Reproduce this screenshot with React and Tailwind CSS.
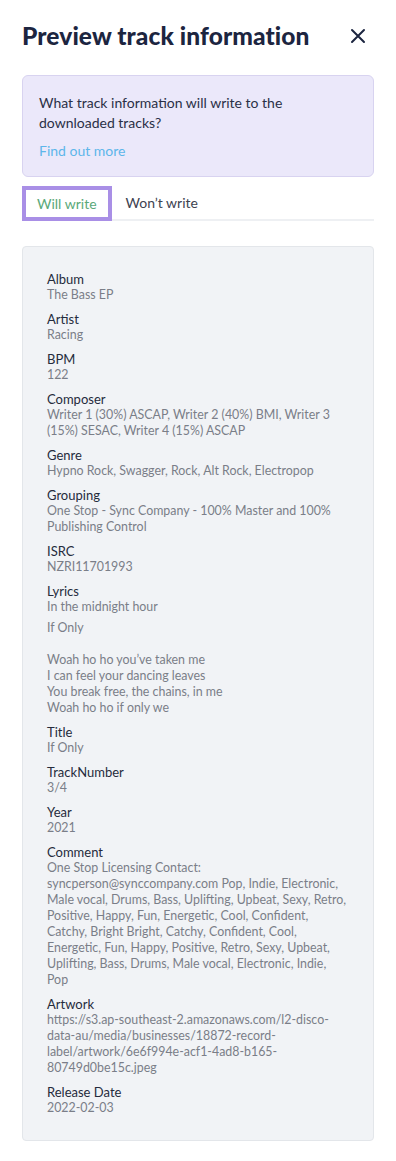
import React, { useState } from 'react';

const fields = [
  { label: 'Album', value: 'The Bass EP' },
  { label: 'Artist', value: 'Racing' },
  { label: 'BPM', value: '122' },
  { label: 'Composer', value: 'Writer 1 (30%) ASCAP, Writer 2 (40%) BMI, Writer 3 (15%) SESAC, Writer 4 (15%) ASCAP' },
  { label: 'Genre', value: 'Hypno Rock, Swagger, Rock, Alt Rock, Electropop' },
  { label: 'Grouping', value: 'One Stop - Sync Company - 100% Master and 100% Publishing Control' },
  { label: 'ISRC', value: 'NZRI11701993' },
  { label: 'Lyrics', lyrics: true },
  { label: 'Title', value: 'If Only' },
  { label: 'TrackNumber', value: '3/4' },
  { label: 'Year', value: '2021' },
  {
    label: 'Comment',
    value:
      'One Stop Licensing Contact: syncperson@synccompany.com Pop, Indie, Electronic, Male vocal, Drums, Bass, Uplifting, Upbeat, Sexy, Retro, Positive, Happy, Fun, Energetic, Cool, Confident, Catchy, Bright Bright, Catchy, Confident, Cool, Energetic, Fun, Happy, Positive, Retro, Sexy, Upbeat, Uplifting, Bass, Drums, Male vocal, Electronic, Indie, Pop',
  },
  {
    label: 'Artwork',
    value:
      'https://s3.ap-southeast-2.amazonaws.com/l2-disco-data-au/media/businesses/18872-record-label/artwork/6e6f994e-acf1-4ad8-b165-80749d0be15c.jpeg',
  },
  { label: 'Release Date', value: '2022-02-03' },
];

const Lyrics = () => (
  <div className="text-[12.4px] leading-4 text-[#7a7e88]">
    <p className="mb-[5px]">In the midnight hour</p>
    <p>
      If Only
      <br />
      <br />
      Woah ho ho you’ve taken me
      <br />
      I can feel your dancing leaves
      <br />
      You break free, the chains, in me
      <br />
      Woah ho ho if only we
    </p>
  </div>
);

export default function App() {
  const [tab, setTab] = useState('will');

  return (
    <div className="min-h-screen bg-white px-[22px] pt-[20px] pb-[22px] font-['Lato','Noto_Sans',sans-serif] text-[#1c2540]">
      {/* Cabecera */}
      <div className="flex items-center justify-between">
        <h1 className="text-[24.5px] font-black leading-8 tracking-[0.1px] text-[#1c2540]">Preview track information</h1>
        <button className="mr-[8px] text-[#1c2540]" aria-label="Close">
          <svg width="16" height="16" viewBox="0 0 16 16" fill="none" stroke="currentColor" strokeWidth="2" strokeLinecap="round">
            <path d="M2 2 L14 14 M14 2 L2 14" />
          </svg>
        </button>
      </div>

      {/* Caja informativa */}
      <div className="mt-[23px] rounded-md border border-[#d8d3f0] bg-[#ebe8fa] px-[16px] pt-[17px] pb-[15px]">
        <p className="text-[14px] leading-5 text-[#2a3047]">What track information will write to the downloaded tracks?</p>
        <a href="#" className="mt-[8px] block text-[14px] leading-5 text-[#5db6ea]">
          Find out more
        </a>
      </div>

      {/* Pestañas */}
      <div className="mt-[9px] flex items-end">
        <button
          onClick={() => setTab('will')}
          className={`h-[35px] border-4 px-[11px] text-[14px] leading-5 ${
            tab === 'will' ? 'border-[#a98fe6] bg-white text-[#5aa979]' : 'border-transparent text-[#3d4250]'
          }`}
        >
          Will write
        </button>
        <div className="flex flex-1 items-end border-b-2 border-[#eef0f3]">
          <button
            onClick={() => setTab('wont')}
            className={`h-[33px] px-[14px] text-[14px] leading-5 ${tab === 'wont' ? 'text-[#5aa979]' : 'text-[#3d4250]'}`}
          >
            Won’t write
          </button>
        </div>
      </div>

      {/* Lista de campos */}
      <div className="mt-[25px] rounded border border-[#e3e6ea] bg-[#f1f3f6] px-[24px] pt-[24px] pb-[24px]">
        <div className="flex flex-col gap-2">
          {fields.map((f) => (
            <div key={f.label}>
              <div className="text-[13px] font-normal leading-4 text-[#252b3c]">{f.label}</div>
              {f.lyrics ? (
                <Lyrics />
              ) : (
                <div className="break-words text-[12.4px] leading-4 text-[#7a7e88]">{f.value}</div>
              )}
            </div>
          ))}
        </div>
      </div>
    </div>
  );
}
